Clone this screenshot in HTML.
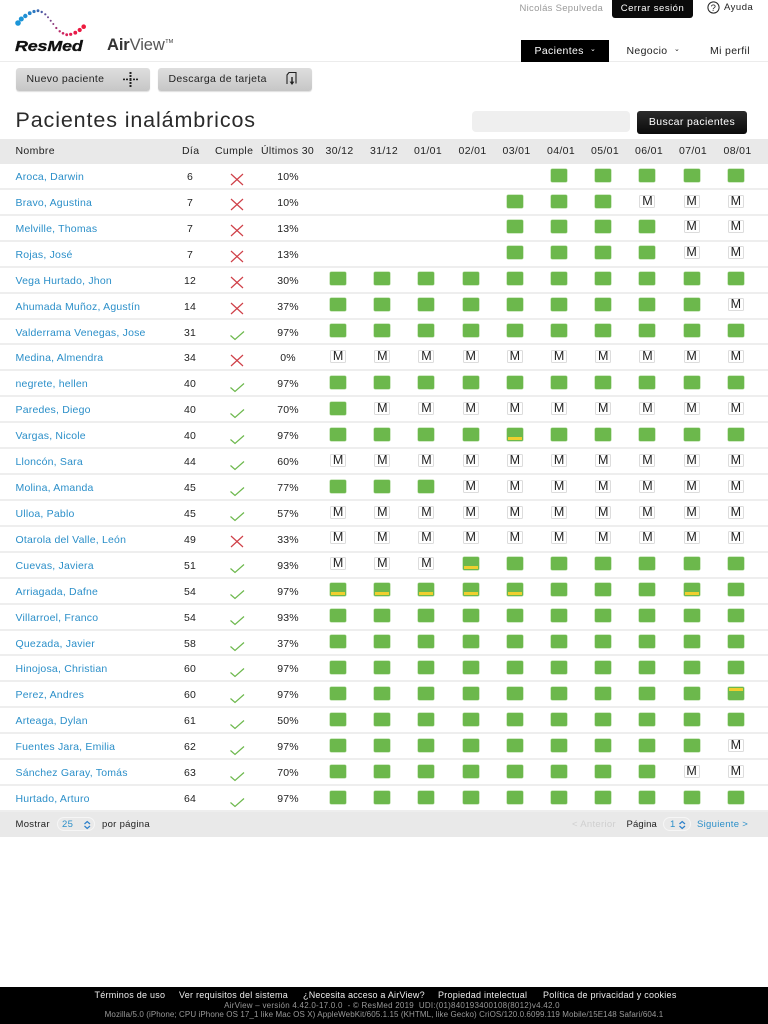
<!DOCTYPE html>
<html lang="es"><head><meta charset="utf-8"><title>AirView</title>
<style>
html,body{margin:0;padding:0;background:#fff}
body{position:relative;width:768px;height:1024px;overflow:hidden;font:10.5px/14px "Liberation Sans",sans-serif;letter-spacing:.35px;color:#222}
.a{position:absolute;white-space:nowrap}
.btn{position:absolute;top:68px;height:23px;border-radius:3px;background:linear-gradient(#dedede,#c6c6c6);box-shadow:0 1px 1px #ddd}
.bar{position:absolute;left:0;width:768px;background:#e9e9e9}
.r{position:absolute;left:0;width:768px;height:25.92px;letter-spacing:.2px}
.r::after{content:"";position:absolute;left:0;right:0;bottom:0;height:2px;background:#eee}
.r a{position:absolute;left:15.5px;top:6px;color:#2b8fc9;text-decoration:none}
.r b{position:absolute;left:170px;width:40px;top:6px;text-align:center;font-weight:400}
.r u{position:absolute;left:268px;width:40px;top:6px;text-align:center;text-decoration:none}
.r svg{position:absolute;left:229px;top:6.5px}
.d{position:absolute;left:316px;top:0;display:grid;grid-template-columns:repeat(10,44.2px)}
.d i{display:block;position:relative;margin:4.6px auto 0;width:16px;height:13px;box-sizing:border-box;border-radius:1.5px;font-style:normal}
.d .e{background:none}
.d .g{background:#6cb84c;box-shadow:0 0 0 .5px #a5d48f}
.d .y{background:#6cb84c;box-shadow:0 0 0 .5px #a5d48f}
.d .y::after{content:"";position:absolute;left:1px;right:1px;bottom:1px;height:3px;background:#f0cf2e}
.d .t::after{bottom:auto;top:1px}
.d .m{border:1px solid #dcdcdc;background:#fff;font-size:12.5px;line-height:11px;text-align:center;color:#222;letter-spacing:0}
.f{position:absolute;left:0;width:768px;text-align:center;white-space:nowrap}
.p{font-size:9.5px;letter-spacing:.3px}
.w{color:#eee;font-size:9px;letter-spacing:.25px}
</style></head><body>

<svg class="a" style="left:0;top:0" width="100" height="40"><g>
<circle cx="18" cy="23" r="2.8" fill="#1b95d8"/><circle cx="21.3" cy="19" r="2.5" fill="#1b95d8"/><circle cx="25.3" cy="16" r="2.2" fill="#1f8fd4"/><circle cx="29.7" cy="13.2" r="1.9" fill="#2584cb"/><circle cx="34" cy="11.5" r="1.6" fill="#2c78c0"/><circle cx="38" cy="10.7" r="1.4" fill="#3a68b0"/><circle cx="41.7" cy="12" r="1.2" fill="#4a5aa4"/><circle cx="45.3" cy="14.3" r="1.1" fill="#5c4f99"/><circle cx="48" cy="17.3" r="1" fill="#6b478f"/><circle cx="50.7" cy="20.7" r="1" fill="#7a4085"/><circle cx="53.3" cy="24" r="1" fill="#8a3a7d"/><circle cx="56.3" cy="28" r="1.1" fill="#a03272"/><circle cx="59.7" cy="31.3" r="1.2" fill="#b62a68"/><circle cx="63" cy="33.3" r="1.3" fill="#ca2460"/><circle cx="66.7" cy="34.7" r="1.4" fill="#d92058"/><circle cx="70.7" cy="34.3" r="1.6" fill="#e21c50"/><circle cx="75.3" cy="32.7" r="1.9" fill="#e81a48"/><circle cx="79.7" cy="30" r="2.1" fill="#eb1a42"/><circle cx="83.7" cy="26.7" r="2.3" fill="#ee1a3e"/></g></svg>
<div class="a" style="left:15px;top:37.5px;font:italic 700 14.5px/18px 'Liberation Sans',sans-serif;letter-spacing:-.1px;color:#111;transform-origin:0 50%;transform:scaleX(1.23);-webkit-text-stroke:.3px #111">ResMed</div>
<div class="a" style="left:107px;top:35.5px;font:16.5px/19px 'Liberation Sans',sans-serif;letter-spacing:-.1px;color:#333"><span style="font-weight:700">Air</span><span style="color:#555">View</span><span style="font-size:5.5px;position:relative;top:-7px;letter-spacing:0;margin-left:.5px">TM</span></div>

<div class="a" style="left:519.5px;top:1.5px;color:#9a9a9a;font-size:9.5px;letter-spacing:.29px">Nicolás Sepulveda</div>
<div class="a" style="left:612px;top:-3px;width:81px;height:20.5px;background:#0a0a0a;border-radius:0 0 3px 3px;color:#fff;text-align:center;line-height:24px;font-size:9.5px;letter-spacing:.5px">Cerrar sesión</div>
<svg class="a" style="left:707px;top:1px" width="14" height="14"><circle cx="6.5" cy="6.5" r="5.6" fill="none" stroke="#222" stroke-width="1"/><text x="6.5" y="10" font-size="9.5" text-anchor="middle" fill="#222" font-family="Liberation Sans">?</text></svg>
<div class="a" style="left:724px;top:1px;font-size:9.5px;letter-spacing:.5px">Ayuda</div>

<div class="a" style="left:0;top:61px;width:768px;height:1px;background:#ececec"></div>
<div class="a" style="left:521px;top:40px;width:88px;height:21.5px;background:#000;color:#fff"><span class="a" style="left:13.5px;top:4px">Pacientes</span><span class="a" style="left:69px;top:3px;font-size:7px">&#8964;</span></div>
<div class="a" style="left:626.5px;top:44px">Negocio</div><div class="a" style="left:674px;top:43px;font-size:7px">&#8964;</div>
<div class="a" style="left:710px;top:44px">Mi perfil</div>

<div class="btn" style="left:16px;width:134px"></div>
<div class="a" style="left:26.5px;top:71.5px">Nuevo paciente</div>
<svg class="a" style="left:122px;top:71px" width="17" height="17" fill="#222"><rect x="7.5" y="1" width="2" height="2"/><rect x="7.5" y="4" width="2" height="2"/><rect x="7.5" y="7" width="2" height="3"/><rect x="7.5" y="11" width="2" height="2"/><rect x="7.5" y="14" width="2" height="2"/><rect x="1" y="7.6" width="2" height="1.6"/><rect x="4" y="7.6" width="2" height="1.6"/><rect x="11" y="7.6" width="2" height="1.6"/><rect x="14" y="7.6" width="2" height="1.6"/></svg>
<div class="btn" style="left:157.5px;width:154px"></div>
<div class="a" style="left:168.5px;top:71.5px">Descarga de tarjeta</div>
<svg class="a" style="left:285px;top:71px" width="14" height="16" fill="none" stroke="#222"><path d="M2 13V4l2-2.5h7v11" stroke-width="1.1"/><path d="M7 6v7" stroke-width="1.4"/><path d="M4.6 10.6 7 14l2.4-3.4z" fill="#222" stroke="none"/></svg>

<div class="a" style="left:15.5px;top:105.5px;font-size:21.5px;line-height:28px;letter-spacing:.88px;color:#2a2a2a">Pacientes inalámbricos</div>
<div class="a" style="left:471.5px;top:110.5px;width:158px;height:21.5px;background:#efefef;border-radius:4px"></div>
<div class="a" style="left:637px;top:110.5px;width:110px;height:23px;border-radius:3px;background:linear-gradient(#2c2c2c,#0a0a0a);color:#fff;text-align:center;line-height:23px">Buscar pacientes</div>

<div class="bar" style="top:139px;height:25px"></div>
<div class="a" style="left:15.5px;top:143.5px">Nombre</div>
<div class="a" style="left:182px;top:143.5px">Día</div>
<div class="a" style="left:215px;top:143.5px">Cumple</div>
<div class="a" style="left:261px;top:143.5px">Últimos 30</div>
<div class="a" style="left:325.5px;top:143.5px">30/12</div>
<div class="a" style="left:370px;top:143.5px">31/12</div>
<div class="a" style="left:414px;top:143.5px">01/01</div>
<div class="a" style="left:458.5px;top:143.5px">02/01</div>
<div class="a" style="left:502.5px;top:143.5px">03/01</div>
<div class="a" style="left:547px;top:143.5px">04/01</div>
<div class="a" style="left:591px;top:143.5px">05/01</div>
<div class="a" style="left:635px;top:143.5px">06/01</div>
<div class="a" style="left:679px;top:143.5px">07/01</div>
<div class="a" style="left:723.5px;top:143.5px">08/01</div>

<svg width="0" height="0" style="position:absolute"><defs>
<symbol id="x" viewBox="0 0 16 16"><path d="M2 3l12 11M14 3 2 14" stroke="#cf4048" stroke-width="1.2" fill="none"/></symbol>
<symbol id="c" viewBox="0 0 16 16"><path d="M1.5 9.5 6 13.5 15 5.5" stroke="#6cb84c" stroke-width="1.2" fill="none"/></symbol>
</defs></svg>

<div class="r" style="top:164px"><a>Aroca, Darwin</a><b>6</b><svg width="16" height="16"><use href="#x"/></svg><u>10%</u><div class="d"><i class="e"></i><i class="e"></i><i class="e"></i><i class="e"></i><i class="e"></i><i class="g"></i><i class="g"></i><i class="g"></i><i class="g"></i><i class="g"></i></div></div>
<div class="r" style="top:189.92px"><a>Bravo, Agustina</a><b>7</b><svg width="16" height="16"><use href="#x"/></svg><u>10%</u><div class="d"><i class="e"></i><i class="e"></i><i class="e"></i><i class="e"></i><i class="g"></i><i class="g"></i><i class="g"></i><i class="m">M</i><i class="m">M</i><i class="m">M</i></div></div>
<div class="r" style="top:215.84px"><a>Melville, Thomas</a><b>7</b><svg width="16" height="16"><use href="#x"/></svg><u>13%</u><div class="d"><i class="e"></i><i class="e"></i><i class="e"></i><i class="e"></i><i class="g"></i><i class="g"></i><i class="g"></i><i class="g"></i><i class="m">M</i><i class="m">M</i></div></div>
<div class="r" style="top:241.76px"><a>Rojas, José</a><b>7</b><svg width="16" height="16"><use href="#x"/></svg><u>13%</u><div class="d"><i class="e"></i><i class="e"></i><i class="e"></i><i class="e"></i><i class="g"></i><i class="g"></i><i class="g"></i><i class="g"></i><i class="m">M</i><i class="m">M</i></div></div>
<div class="r" style="top:267.68px"><a>Vega Hurtado, Jhon</a><b>12</b><svg width="16" height="16"><use href="#x"/></svg><u>30%</u><div class="d"><i class="g"></i><i class="g"></i><i class="g"></i><i class="g"></i><i class="g"></i><i class="g"></i><i class="g"></i><i class="g"></i><i class="g"></i><i class="g"></i></div></div>
<div class="r" style="top:293.6px"><a>Ahumada Muñoz, Agustín</a><b>14</b><svg width="16" height="16"><use href="#x"/></svg><u>37%</u><div class="d"><i class="g"></i><i class="g"></i><i class="g"></i><i class="g"></i><i class="g"></i><i class="g"></i><i class="g"></i><i class="g"></i><i class="g"></i><i class="m">M</i></div></div>
<div class="r" style="top:319.52px"><a>Valderrama Venegas, Jose</a><b>31</b><svg width="16" height="16"><use href="#c"/></svg><u>97%</u><div class="d"><i class="g"></i><i class="g"></i><i class="g"></i><i class="g"></i><i class="g"></i><i class="g"></i><i class="g"></i><i class="g"></i><i class="g"></i><i class="g"></i></div></div>
<div class="r" style="top:345.44px"><a>Medina, Almendra</a><b>34</b><svg width="16" height="16"><use href="#x"/></svg><u>0%</u><div class="d"><i class="m">M</i><i class="m">M</i><i class="m">M</i><i class="m">M</i><i class="m">M</i><i class="m">M</i><i class="m">M</i><i class="m">M</i><i class="m">M</i><i class="m">M</i></div></div>
<div class="r" style="top:371.36px"><a>negrete, hellen</a><b>40</b><svg width="16" height="16"><use href="#c"/></svg><u>97%</u><div class="d"><i class="g"></i><i class="g"></i><i class="g"></i><i class="g"></i><i class="g"></i><i class="g"></i><i class="g"></i><i class="g"></i><i class="g"></i><i class="g"></i></div></div>
<div class="r" style="top:397.28px"><a>Paredes, Diego</a><b>40</b><svg width="16" height="16"><use href="#c"/></svg><u>70%</u><div class="d"><i class="g"></i><i class="m">M</i><i class="m">M</i><i class="m">M</i><i class="m">M</i><i class="m">M</i><i class="m">M</i><i class="m">M</i><i class="m">M</i><i class="m">M</i></div></div>
<div class="r" style="top:423.2px"><a>Vargas, Nicole</a><b>40</b><svg width="16" height="16"><use href="#c"/></svg><u>97%</u><div class="d"><i class="g"></i><i class="g"></i><i class="g"></i><i class="g"></i><i class="y"></i><i class="g"></i><i class="g"></i><i class="g"></i><i class="g"></i><i class="g"></i></div></div>
<div class="r" style="top:449.12px"><a>Lloncón, Sara</a><b>44</b><svg width="16" height="16"><use href="#c"/></svg><u>60%</u><div class="d"><i class="m">M</i><i class="m">M</i><i class="m">M</i><i class="m">M</i><i class="m">M</i><i class="m">M</i><i class="m">M</i><i class="m">M</i><i class="m">M</i><i class="m">M</i></div></div>
<div class="r" style="top:475.04px"><a>Molina, Amanda</a><b>45</b><svg width="16" height="16"><use href="#c"/></svg><u>77%</u><div class="d"><i class="g"></i><i class="g"></i><i class="g"></i><i class="m">M</i><i class="m">M</i><i class="m">M</i><i class="m">M</i><i class="m">M</i><i class="m">M</i><i class="m">M</i></div></div>
<div class="r" style="top:500.96px"><a>Ulloa, Pablo</a><b>45</b><svg width="16" height="16"><use href="#c"/></svg><u>57%</u><div class="d"><i class="m">M</i><i class="m">M</i><i class="m">M</i><i class="m">M</i><i class="m">M</i><i class="m">M</i><i class="m">M</i><i class="m">M</i><i class="m">M</i><i class="m">M</i></div></div>
<div class="r" style="top:526.88px"><a>Otarola del Valle, León</a><b>49</b><svg width="16" height="16"><use href="#x"/></svg><u>33%</u><div class="d"><i class="m">M</i><i class="m">M</i><i class="m">M</i><i class="m">M</i><i class="m">M</i><i class="m">M</i><i class="m">M</i><i class="m">M</i><i class="m">M</i><i class="m">M</i></div></div>
<div class="r" style="top:552.8px"><a>Cuevas, Javiera</a><b>51</b><svg width="16" height="16"><use href="#c"/></svg><u>93%</u><div class="d"><i class="m">M</i><i class="m">M</i><i class="m">M</i><i class="y"></i><i class="g"></i><i class="g"></i><i class="g"></i><i class="g"></i><i class="g"></i><i class="g"></i></div></div>
<div class="r" style="top:578.72px"><a>Arriagada, Dafne</a><b>54</b><svg width="16" height="16"><use href="#c"/></svg><u>97%</u><div class="d"><i class="y"></i><i class="y"></i><i class="y"></i><i class="y"></i><i class="y"></i><i class="g"></i><i class="g"></i><i class="g"></i><i class="y"></i><i class="g"></i></div></div>
<div class="r" style="top:604.64px"><a>Villarroel, Franco</a><b>54</b><svg width="16" height="16"><use href="#c"/></svg><u>93%</u><div class="d"><i class="g"></i><i class="g"></i><i class="g"></i><i class="g"></i><i class="g"></i><i class="g"></i><i class="g"></i><i class="g"></i><i class="g"></i><i class="g"></i></div></div>
<div class="r" style="top:630.56px"><a>Quezada, Javier</a><b>58</b><svg width="16" height="16"><use href="#c"/></svg><u>37%</u><div class="d"><i class="g"></i><i class="g"></i><i class="g"></i><i class="g"></i><i class="g"></i><i class="g"></i><i class="g"></i><i class="g"></i><i class="g"></i><i class="g"></i></div></div>
<div class="r" style="top:656.48px"><a>Hinojosa, Christian</a><b>60</b><svg width="16" height="16"><use href="#c"/></svg><u>97%</u><div class="d"><i class="g"></i><i class="g"></i><i class="g"></i><i class="g"></i><i class="g"></i><i class="g"></i><i class="g"></i><i class="g"></i><i class="g"></i><i class="g"></i></div></div>
<div class="r" style="top:682.4px"><a>Perez, Andres</a><b>60</b><svg width="16" height="16"><use href="#c"/></svg><u>97%</u><div class="d"><i class="g"></i><i class="g"></i><i class="g"></i><i class="g"></i><i class="g"></i><i class="g"></i><i class="g"></i><i class="g"></i><i class="g"></i><i class="y t"></i></div></div>
<div class="r" style="top:708.32px"><a>Arteaga, Dylan</a><b>61</b><svg width="16" height="16"><use href="#c"/></svg><u>50%</u><div class="d"><i class="g"></i><i class="g"></i><i class="g"></i><i class="g"></i><i class="g"></i><i class="g"></i><i class="g"></i><i class="g"></i><i class="g"></i><i class="g"></i></div></div>
<div class="r" style="top:734.24px"><a>Fuentes Jara, Emilia</a><b>62</b><svg width="16" height="16"><use href="#c"/></svg><u>97%</u><div class="d"><i class="g"></i><i class="g"></i><i class="g"></i><i class="g"></i><i class="g"></i><i class="g"></i><i class="g"></i><i class="g"></i><i class="g"></i><i class="m">M</i></div></div>
<div class="r" style="top:760.16px"><a>Sánchez Garay, Tomás</a><b>63</b><svg width="16" height="16"><use href="#c"/></svg><u>70%</u><div class="d"><i class="g"></i><i class="g"></i><i class="g"></i><i class="g"></i><i class="g"></i><i class="g"></i><i class="g"></i><i class="g"></i><i class="m">M</i><i class="m">M</i></div></div>
<div class="r" style="top:786.08px"><a>Hurtado, Arturo</a><b>64</b><svg width="16" height="16"><use href="#c"/></svg><u>97%</u><div class="d"><i class="g"></i><i class="g"></i><i class="g"></i><i class="g"></i><i class="g"></i><i class="g"></i><i class="g"></i><i class="g"></i><i class="g"></i><i class="g"></i></div></div>

<div class="bar" style="top:812px;height:25px"></div>
<div class="a p" style="left:15.5px;top:818px">Mostrar</div>
<div class="a" style="left:57px;top:817px;width:38px;height:14px;border:1px solid #f6f6f6;border-radius:8px;box-sizing:border-box"></div>
<div class="a p" style="left:62px;top:818px;color:#2b8fc9">25</div>
<svg class="a" style="left:83px;top:819.5px" width="9" height="10" fill="none" stroke="#2b7fc9" stroke-width="1.2"><path d="M1.5 4 4.2 1.5 7 4M1.5 6 4.2 8.5 7 6"/></svg>
<div class="a p" style="left:102px;top:818px">por página</div>
<div class="a p" style="left:572px;top:818px;color:#cfcfcf">&lt; Anterior</div>
<div class="a p" style="left:626.5px;top:818px;letter-spacing:.15px">Página</div>
<div class="a" style="left:663px;top:817px;width:28px;height:14px;border:1px solid #f6f6f6;border-radius:8px;box-sizing:border-box"></div>
<div class="a p" style="left:670px;top:818px;color:#2b8fc9">1</div>
<svg class="a" style="left:678px;top:819.5px" width="9" height="10" fill="none" stroke="#2b7fc9" stroke-width="1.2"><path d="M1.5 4 4.2 1.5 7 4M1.5 6 4.2 8.5 7 6"/></svg>
<div class="a p" style="left:697px;top:818px;color:#2b8fc9">Siguiente &gt;</div>

<div class="a" style="left:0;top:987px;width:768px;height:37px;background:#000"></div>
<div class="a w" style="left:94.5px;top:988px">Términos de uso</div>
<div class="a w" style="left:179px;top:988px">Ver requisitos del sistema</div>
<div class="a w" style="left:303px;top:988px;letter-spacing:.2px">¿Necesita acceso a AirView?</div>
<div class="a w" style="left:438px;top:988px">Propiedad intelectual</div>
<div class="a w" style="left:543px;top:988px">Política de privacidad y cookies</div>
<div class="f" style="top:999px;left:8px;color:#999;font-size:8px;letter-spacing:.24px">AirView – versión 4.42.0-17.0.0 &nbsp;- © ResMed 2019 &nbsp;UDI:(01)840193400108(8012)v4.42.0</div>
<div class="f" style="top:1008px;color:#999;font-size:8px;letter-spacing:.09px">Mozilla/5.0 (iPhone; CPU iPhone OS 17_1 like Mac OS X) AppleWebKit/605.1.15 (KHTML, like Gecko) CriOS/120.0.6099.119 Mobile/15E148 Safari/604.1</div>
</body></html>
